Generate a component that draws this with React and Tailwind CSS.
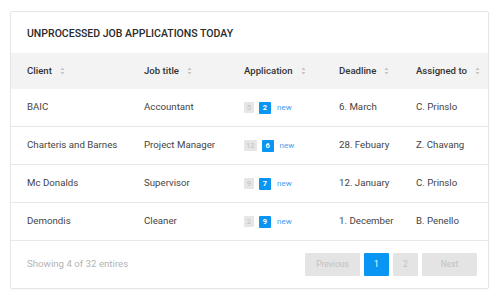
const rows = [
  { client: "BAIC", job: "Accountant", old: 5, fresh: 2, deadline: "6. March", who: "C. Prinslo" },
  { client: "Charteris and Barnes", job: "Project Manager", old: 12, fresh: 6, deadline: "28. Febuary", who: "Z. Chavang" },
  { client: "Mc Donalds", job: "Supervisor", old: 9, fresh: 7, deadline: "12. January", who: "C. Prinslo" },
  { client: "Demondis", job: "Cleaner", old: 2, fresh: 9, deadline: "1. December", who: "B. Penello" },
];

function SortIcon() {
  return (
    <svg width="5" height="8" viewBox="0 0 5 8" className="ml-[8px] shrink-0">
      <path d="M2.5 0.5 L4.5 3 L0.5 3 Z" fill="#c4c4c4" />
      <path d="M2.5 7.5 L4.5 5 L0.5 5 Z" fill="#c4c4c4" />
    </svg>
  );
}

function Head({ children }) {
  return (
    <div className="flex items-center">
      <span>{children}</span>
      <SortIcon />
    </div>
  );
}

const cols = "grid grid-cols-[117px_100px_95px_77px_1fr] items-center pl-4";

export default function App() {
  return (
    <div className="w-[500px] h-[300px] bg-white pt-[11px] pl-[10px] font-['Roboto',sans-serif]">
      <div className="w-[479px] h-[278px] border border-[#e6e6e6] rounded-[2px] shadow-[0_1px_2px_rgba(0,0,0,0.04)] flex flex-col">
        <div className="h-[41px] flex items-center pl-4 pt-[2px] text-[10.5px] font-medium text-[#2a2a2a]">
          UNPROCESSED JOB APPLICATIONS TODAY
        </div>
        <div className={`${cols} h-[36px] bg-[#f3f3f3] text-[9.6px] font-medium text-[#333]`}>
          <Head>Client</Head>
          <Head>Job title</Head>
          <Head>Application</Head>
          <Head>Deadline</Head>
          <Head>Assigned to</Head>
        </div>
        {rows.map((r) => (
          <div key={r.client} className={`${cols} h-[38px] border-b border-[#e8e8e8] text-[9.7px] text-[#444]`}>
            <div>{r.client}</div>
            <div>{r.job}</div>
            <div className="flex items-center">
              <span className="min-w-[10px] h-[11px] px-[2px] flex items-center justify-center bg-[#e6e6e6] text-[#c6c6c6] text-[7.5px] font-medium rounded-[1px]">
                {r.old}
              </span>
              <span className="ml-[5px] min-w-[12px] h-[12px] px-[3px] flex items-center justify-center bg-[#0896f2] text-white text-[7.5px] font-bold rounded-[1px]">
                {r.fresh}
              </span>
              <span className="ml-[6px] text-[8px] text-[#3a9ff0]">new</span>
            </div>
            <div>{r.deadline}</div>
            <div>{r.who}</div>
          </div>
        ))}
        <div className="flex-1 flex items-center justify-between pl-4 pr-[11px]">
          <span className="text-[9.7px] text-[#b3b3b3]">Showing 4 of 32 entires</span>
          <div className="flex gap-[4px] text-[8.5px]">
            <button className="w-[55px] h-[23px] bg-[#e4e4e4] text-[#c2c2c2] rounded-[1px]">Previous</button>
            <button className="w-[25px] h-[23px] bg-[#0896f2] text-white rounded-[1px]">1</button>
            <button className="w-[25px] h-[23px] bg-[#e4e4e4] text-[#c2c2c2] rounded-[1px]">2</button>
            <button className="w-[55px] h-[23px] bg-[#e4e4e4] text-[#c2c2c2] rounded-[1px]">Next</button>
          </div>
        </div>
      </div>
    </div>
  );
}
